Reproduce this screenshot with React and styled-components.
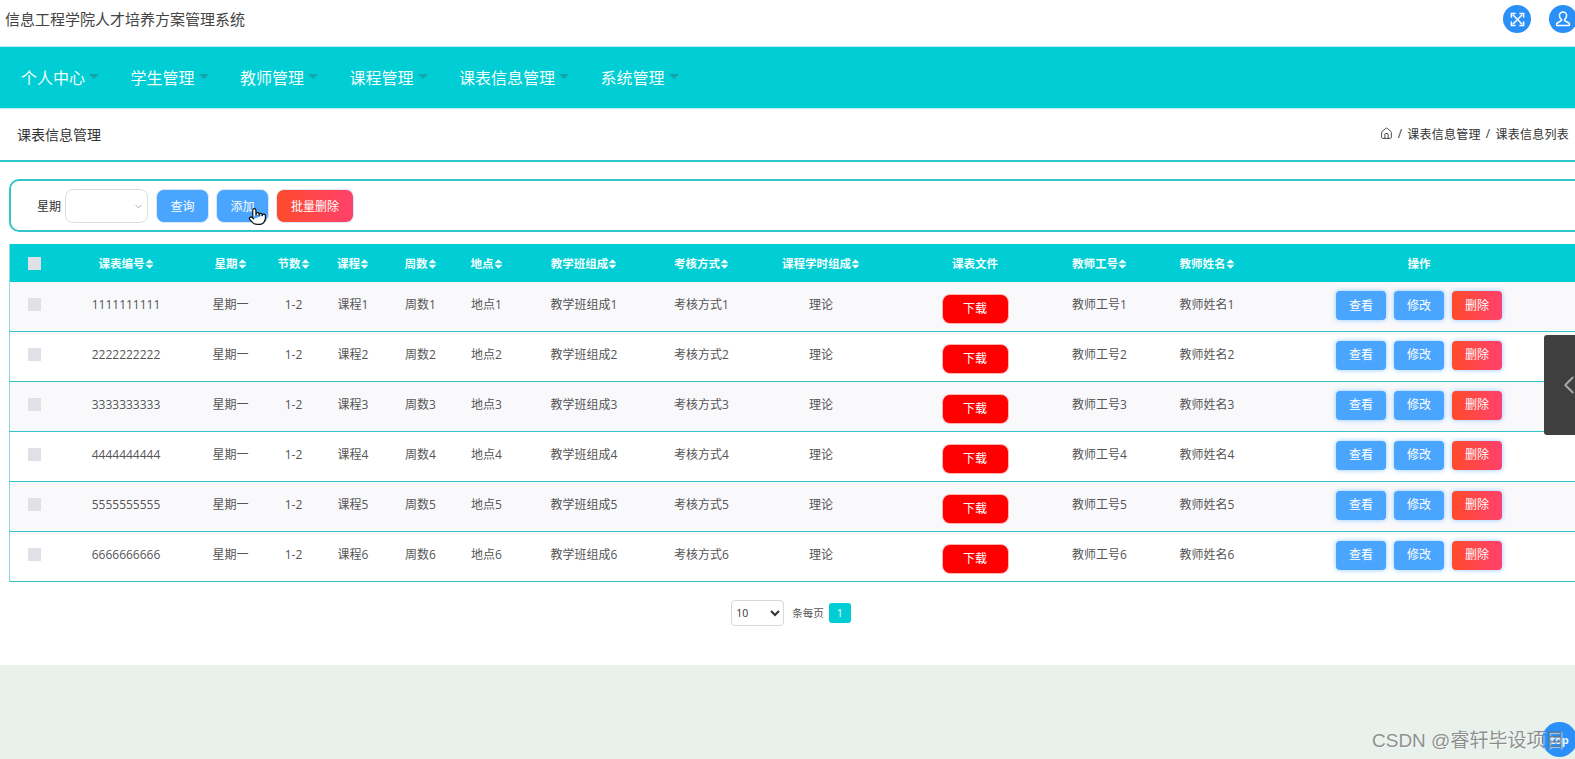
import React from "react";
import styled, { createGlobalStyle } from "styled-components";
import { Home, Pointer, ChevronLeft, ChevronDown } from "lucide-react";

const Global = createGlobalStyle`
  html, body { margin: 0; padding: 0; background: #e8f1ec; overflow: hidden; }
  body { font-family: "Open Sans", "Noto Sans CJK SC", sans-serif; color: #444; }
  * { box-sizing: border-box; }
`;

const Page = styled.div`
  position: relative;
  width: 1575px;
  height: 759px;
  overflow: hidden;
`;
const Main = styled.div`
  height: 665px;
  background: #fff;
`;
const TopBar = styled.header`
  height: 47px;
  display: flex;
  align-items: center;
  justify-content: space-between;
  padding: 0 0 9px 5px;
  background: #fff;
  border-bottom: 1px solid #b8eef0;
`;
const Title = styled.div`
  font-size: 15px;
  color: #444;
  line-height: 20px;
`;
const TopIcons = styled.div`
  display: flex;
  gap: 18px;
  margin-right: -2px;
  margin-top: 1px;
`;
const RoundIcon = styled.div`
  width: 28px;
  height: 28px;
  border-radius: 50%;
  background: #2a90f7;
  display: flex;
  align-items: center;
  justify-content: center;
`;
const Nav = styled.nav`
  height: 62px;
  background: #00ced4;
  display: flex;
  align-items: center;
  padding-left: 21px;
  gap: 31.5px;
  border-bottom: 1px solid #b8eef0;
`;
const NavItem = styled.div`
  display: flex;
  align-items: center;
  color: #f2fdfd;
  font-size: 16px;
  line-height: 20px;
`;
const Caret = styled.span`
  width: 0;
  height: 0;
  margin-left: 4px;
  margin-bottom: 2px;
  border-left: 5px solid transparent;
  border-right: 5px solid transparent;
  border-top: 5px solid #14a3a8;
`;
const Crumbs = styled.div`
  height: 53px;
  padding: 0 6px 2px 17px;
  display: flex;
  align-items: center;
  justify-content: space-between;
  border-bottom: 2px solid #33c6c9;
`;
const CrumbTitle = styled.div`
  font-size: 14px;
  color: #333;
`;
const CrumbPath = styled.div`
  display: flex;
  align-items: center;
  gap: 5px;
  font-size: 12px;
  letter-spacing: 0.25px;
  color: #333;
`;
const SearchPanel = styled.div`
  margin: 17px -12px 0 9px;
  height: 53px;
  border: 2px solid #33c6c9;
  border-radius: 10px;
  display: flex;
  align-items: center;
  padding-left: 26px;
`;
const FieldLabel = styled.label`
  font-size: 12px;
  color: #333;
  margin-right: 4px;
`;
const SelectWrap = styled.div`
  position: relative;
  width: 83px;
  height: 34px;
  margin-right: 8px;
  color: #aaa;
  svg { position: absolute; right: 4px; top: 12px; }
`;
const PlainSelect = styled.select`
  appearance: none;
  width: 100%;
  height: 100%;
  border: 1px solid #ddd;
  border-radius: 8px;
  background: #fff;
`;
const ToolBtn = styled.button`
  position: relative;
  height: 34px;
  width: ${p => p.$w || 53}px;
  margin-right: 7px;
  border: 1px solid #d9e8f8;
  border-radius: 8px;
  color: #fff;
  font: inherit;
  font-size: 12px;
  padding: 0;
  background: ${p => (p.$danger ? "linear-gradient(90deg, #ff4b2b, #ff416c)" : "#4aa5ff")};
`;
const Hand = styled.span`
  position: absolute;
  left: 31px;
  top: 17px;
  line-height: 0;
`;
const Table = styled.table`
  margin: 12px 0 0 9px;
  width: 1566px;
  table-layout: fixed;
  border-collapse: collapse;
  border-left: 1px solid #8fdcdf;
`;
const HeadRow = styled.tr`
  height: 38px;
  background: #00ced4;
`;
const Th = styled.th`
  padding: 0;
  font-size: 11.5px;
  font-weight: 700;
  color: #f4fefe;
  text-align: center;
  vertical-align: middle;
`;
const Row = styled.tr`
  height: 50px;
  background: ${p => (p.$odd ? "#f9f9fc" : "#fff")};
  border-bottom: 1px solid #33c3c8;
  &:first-child { height: 49px; }
`;
const Td = styled.td`
  padding: 15px 0 0;
  font-size: 12px;
  line-height: 16px;
  color: #555;
  text-align: center;
  vertical-align: top;
`;
const Check = styled.span`
  display: inline-block;
  width: 13px;
  height: 13px;
  background: #dfe1e6;
  vertical-align: top;
  margin-top: 1px;
`;
const SortIcon = styled.svg`
  width: 9px;
  height: 10px;
  vertical-align: -1px;
`;
const DownloadBtn = styled.button`
  width: 67px;
  height: 30px;
  margin-top: -3px;
  border: 1px solid #ffb3b3;
  border-radius: 8px;
  background: #ff0000;
  color: #fff;
  font: inherit;
  font-size: 12px;
  padding: 0;
`;
const OpsCell = styled(Td)`
  padding-top: 9px;
`;
const Ops = styled.div`
  display: flex;
  justify-content: center;
  gap: 8px;
`;
const OpBtn = styled.button`
  width: 50px;
  height: 29px;
  border: 0;
  border-radius: 4px;
  color: #fff;
  font: inherit;
  font-size: 12px;
  padding: 0;
  box-shadow: 0 0 5px rgba(74, 165, 255, 0.6);
  background: ${p => (p.$danger ? "linear-gradient(90deg, #ff4b2b, #ff416c)" : "#4aa5ff")};
`;
const Pager = styled.div`
  margin-top: 18px;
  display: flex;
  align-items: center;
  justify-content: center;
  padding-left: 7px;
  font-size: 10.5px;
  color: #555;
`;
const PageSize = styled.select`
  width: 53px;
  height: 26px;
  margin-right: 8px;
  border: 1px solid #d8d8d8;
  border-radius: 4px;
  background: #fff;
  font: inherit;
  color: #333;
`;
const PageNo = styled.span`
  width: 22px;
  height: 20px;
  margin-left: 5px;
  border-radius: 3px;
  background: #00ced4;
  color: #fff;
  display: flex;
  align-items: center;
  justify-content: center;
`;
const SideTab = styled.div`
  position: absolute;
  right: -1px;
  top: 335px;
  width: 32px;
  height: 100px;
  background: #3f3f3f;
  border-radius: 3px 0 0 3px;
  display: flex;
  align-items: center;
  justify-content: flex-end;
  color: #a9a9a9;
  svg { margin-right: -8px; }
`;
const TopBtn = styled.div`
  position: absolute;
  left: 1542px;
  top: 722px;
  width: 35px;
  height: 35px;
  border-radius: 50%;
  background: #2a90f7;
  color: #e8f4ff;
  font-size: 11px;
  font-weight: 700;
  display: flex;
  align-items: center;
  justify-content: center;
`;
const Watermark = styled.div`
  position: absolute;
  left: 1372px;
  top: 728px;
  font-family: "Liberation Sans", "Noto Sans CJK SC", sans-serif;
  font-size: 19px;
  line-height: 26px;
  color: rgba(110, 110, 110, 0.75);
  text-shadow: 1px 1px 1px rgba(255, 255, 255, 0.6);
  white-space: nowrap;
`;

const Sort = () => (
  <SortIcon viewBox="0 0 9 10">
    <path d="M4.5 0.3 8.5 4.3H0.5z M4.5 9.7 0.5 5.7H8.5z" fill="#f4fefe" />
  </SortIcon>
);

const widths = [50, 133, 76, 50, 69, 66, 66, 129, 106, 133, 175, 74, 141, 283, 15];
const heads = [
  ["课表编号", 1], ["星期", 1], ["节数", 1], ["课程", 1], ["周数", 1], ["地点", 1],
  ["教学班组成", 1], ["考核方式", 1], ["课程学时组成", 1], ["课表文件", 0],
  ["教师工号", 1], ["教师姓名", 1], ["操作", 0],
];
const navs = ["个人中心", "学生管理", "教师管理", "课程管理", "课表信息管理", "系统管理"];
const rows = [1, 2, 3, 4, 5, 6];

export default function App() {
  return (
    <Page>
      <Global />
      <Main>
        <TopBar>
          <Title>信息工程学院人才培养方案管理系统</Title>
          <TopIcons>
            <RoundIcon>
              <svg width="15" height="15" viewBox="0 0 16 16" fill="none" stroke="#fff" strokeWidth="1.6">
                <path d="M3 3 13 13M13 3 3 13" />
                <path d="M1.5 6V1.5H6M10 1.5h4.5V6M14.5 10v4.5H10M6 14.5H1.5V10" />
              </svg>
            </RoundIcon>
            <RoundIcon>
              <svg width="18" height="18" viewBox="0 0 18 18" fill="none" stroke="#fff" strokeWidth="1.5">
                <path d="M9 2a3.6 3.6 0 0 0-3.6 3.6c0 2 1 3.2 2 4v1L3.2 13c-.9.4-.9 2.5 0 2.5h11.6c.9 0 .9-2.1 0-2.5l-4.2-2.4v-1c1-.8 2-2 2-4A3.6 3.6 0 0 0 9 2z" />
              </svg>
            </RoundIcon>
          </TopIcons>
        </TopBar>
        <Nav>
          {navs.map(n => (
            <NavItem key={n}>{n}<Caret /></NavItem>
          ))}
        </Nav>
        <Crumbs>
          <CrumbTitle>课表信息管理</CrumbTitle>
          <CrumbPath>
            <Home size={13} strokeWidth={1.6} />
            <span>/</span>
            <span>课表信息管理</span>
            <span>/</span>
            <span>课表信息列表</span>
          </CrumbPath>
        </Crumbs>
        <SearchPanel>
          <FieldLabel>星期</FieldLabel>
          <SelectWrap>
            <PlainSelect />
            <ChevronDown size={11} />
          </SelectWrap>
          <ToolBtn>查询</ToolBtn>
          <ToolBtn>
            添加
            <Hand>
              <Pointer size={19} fill="#fff" color="#111" strokeWidth={1.5} />
            </Hand>
          </ToolBtn>
          <ToolBtn $w={78} $danger>批量删除</ToolBtn>
        </SearchPanel>
        <Table>
          <colgroup>
            {widths.map((w, i) => <col key={i} style={{ width: w }} />)}
          </colgroup>
          <thead>
            <HeadRow>
              <Th><Check /></Th>
              {heads.map(([h, s]) => (
                <Th key={h}>{h}{s ? <Sort /> : null}</Th>
              ))}
              <Th />
            </HeadRow>
          </thead>
          <tbody>
            {rows.map(i => (
              <Row key={i} $odd={i % 2 === 1}>
                <Td><Check /></Td>
                <Td>{String(i).repeat(10)}</Td>
                <Td>星期一</Td>
                <Td>1-2</Td>
                <Td>课程{i}</Td>
                <Td>周数{i}</Td>
                <Td>地点{i}</Td>
                <Td>教学班组成{i}</Td>
                <Td>考核方式{i}</Td>
                <Td>理论</Td>
                <Td><DownloadBtn>下载</DownloadBtn></Td>
                <Td>教师工号{i}</Td>
                <Td>教师姓名{i}</Td>
                <OpsCell>
                  <Ops>
                    <OpBtn>查看</OpBtn>
                    <OpBtn>修改</OpBtn>
                    <OpBtn $danger>删除</OpBtn>
                  </Ops>
                </OpsCell>
                <Td />
              </Row>
            ))}
          </tbody>
        </Table>
        <Pager>
          <PageSize defaultValue="10"><option>10</option><option>20</option></PageSize>
          条每页
          <PageNo>1</PageNo>
        </Pager>
      </Main>
      <SideTab><ChevronLeft size={30} strokeWidth={1.5} /></SideTab>
      <TopBtn>top</TopBtn>
      <Watermark>CSDN @睿轩毕设项目</Watermark>
    </Page>
  );
}
